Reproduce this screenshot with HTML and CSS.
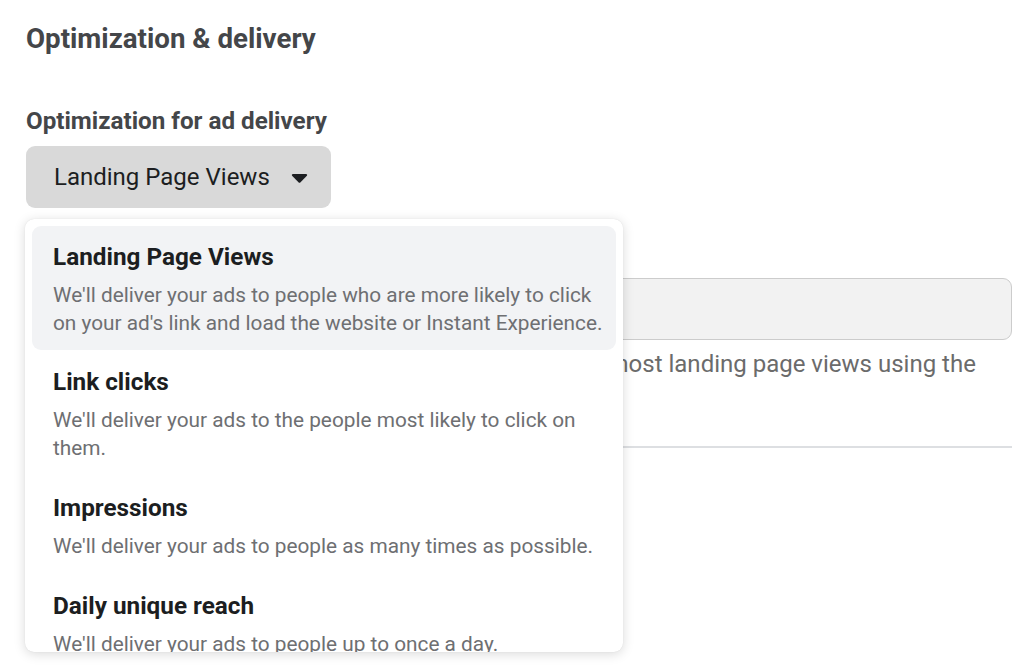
FILE: index.html
```html
<!DOCTYPE html>
<html lang="en">
<head>
    <meta charset="UTF-8">
    <meta name="viewport" content="width=device-width, initial-scale=1.0">
    <title>Optimization &amp; delivery</title>
    <link rel="stylesheet" href="styles.css">
</head>
<body>
    <div class="panel">
        <h2 class="section-title">Optimization &amp; delivery</h2>

        <div class="field">
            <div class="field-label">Optimization for ad delivery</div>
            <div class="select-wrap">
                <button class="select-btn" type="button">
                    <span>Landing Page Views</span>
                    <svg class="caret" width="17" height="11" viewBox="0 0 17 11">
                        <path d="M2 1h13c1 0 1.5 1 .9 1.7L9.3 9.4c-.5.5-1.1.5-1.6 0L1.1 2.7C.5 2 1 1 2 1z" fill="#1c1e21"/>
                    </svg>
                </button>
                <div class="menu">
                    <div class="menu-item active">
                        <div class="item-title">Landing Page Views</div>
                        <div class="item-desc">We'll deliver your ads to people who are more likely to click on your ad's link and load the website or Instant Experience.</div>
                    </div>
                    <div class="menu-item">
                        <div class="item-title">Link clicks</div>
                        <div class="item-desc">We'll deliver your ads to the people most likely to click on them.</div>
                    </div>
                    <div class="menu-item">
                        <div class="item-title">Impressions</div>
                        <div class="item-desc">We'll deliver your ads to people as many times as possible.</div>
                    </div>
                    <div class="menu-item">
                        <div class="item-title">Daily unique reach</div>
                        <div class="item-desc">We'll deliver your ads to people up to once a day.</div>
                    </div>
                </div>
            </div>
        </div>

        <div class="field cost">
            <div class="field-label">Cost per result goal</div>
            <div class="text-input"></div>
            <p class="help">We will try to spend your entire ad budget and gain the most landing page views using the lowest cost.</p>
        </div>

        <div class="divider"></div>
    </div>
</body>
</html>
```

FILE: styles.css
```css
body {
    margin: 0;
    min-height: 665px;
    background: #ffffff;
    font-family: Roboto, "Liberation Sans", Arial, sans-serif;
    color: #1c1e21;
}
.panel {
    width: 986px;
    padding: 22px 0 0 26px;
}
.section-title {
    margin: 0;
    font-size: 27.7px;
    font-weight: 700;
    line-height: 34px;
    color: #444649;
}
.field {
    margin-top: 50px;
}
.field-label {
    font-size: 24.2px;
    font-weight: 700;
    line-height: 30px;
    color: #444649;
}
.select-wrap {
    position: relative;
    margin-top: 10px;
}
.select-btn {
    display: flex;
    align-items: center;
    gap: 21px;
    height: 62px;
    padding: 0 23px 0 28px;
    border: none;
    border-radius: 9px;
    background: #d9d9d9;
    font-family: inherit;
    font-size: 24px;
    color: #1c1e21;
}
.caret {
    margin-top: 2px;
}
.menu {
    position: absolute;
    top: 73px;
    left: -1px;
    z-index: 2;
    box-sizing: border-box;
    width: 598px;
    height: 433px;
    padding: 7px 7px 0 7px;
    overflow: hidden;
    background: #ffffff;
    border-radius: 9px;
    box-shadow: 0 2px 12px rgba(0, 0, 0, 0.15), 0 0 1px rgba(0, 0, 0, 0.12);
}
.menu-item {
    padding: 16px 7px 14px 21px;
    border-radius: 9px;
}
.menu-item.active {
    padding-top: 15px;
    padding-bottom: 13px;
    background: #f2f3f5;
}
.item-title {
    font-size: 24.3px;
    font-weight: 700;
    line-height: 32px;
    color: #1c1e21;
}
.item-desc {
    margin-top: 8px;
    font-size: 20.8px;
    line-height: 28px;
    color: #6e6f72;
}
.cost {
    margin-top: 30px;
}
.text-input {
    height: 60px;
    margin-top: 10px;
    border: 1px solid #cccccc;
    border-radius: 9px;
    background: #f2f2f2;
}
.help {
    margin: 9px 0 0 0;
    font-size: 24px;
    line-height: 30px;
    color: #6b6b6b;
}
.divider {
    height: 2px;
    margin-top: 37px;
    background: #dddfe2;
}
```
